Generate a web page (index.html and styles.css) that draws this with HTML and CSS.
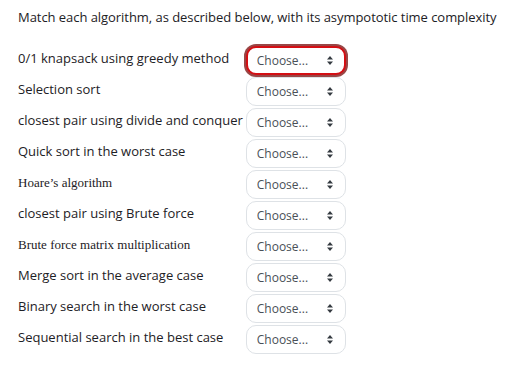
FILE: index.html
```html
<!DOCTYPE html>
<html>
<head>
<meta charset="utf-8">
<link rel="stylesheet" href="styles.css">
</head>
<body>
<div class="question">
  <p class="prompt">Match each algorithm, as described below, with its asympototic time complexity</p>
  <div class="answers">
    <div class="row"><div class="label">0/1 knapsack using greedy method</div><span class="select-wrap"><select class="choose focused"><option>Choose...</option></select><svg class="arrow" width="6" height="9" viewBox="0 0 6 9"><path d="M3 0L6 3.5H0Z M3 9L6 5.5H0Z" fill="#343a40"/></svg></span></div>
    <div class="row"><div class="label">Selection sort</div><span class="select-wrap"><select class="choose"><option>Choose...</option></select><svg class="arrow" width="6" height="9" viewBox="0 0 6 9"><path d="M3 0L6 3.5H0Z M3 9L6 5.5H0Z" fill="#343a40"/></svg></span></div>
    <div class="row"><div class="label">closest pair using divide and conquer</div><span class="select-wrap"><select class="choose"><option>Choose...</option></select><svg class="arrow" width="6" height="9" viewBox="0 0 6 9"><path d="M3 0L6 3.5H0Z M3 9L6 5.5H0Z" fill="#343a40"/></svg></span></div>
    <div class="row"><div class="label">Quick sort in the worst case</div><span class="select-wrap"><select class="choose"><option>Choose...</option></select><svg class="arrow" width="6" height="9" viewBox="0 0 6 9"><path d="M3 0L6 3.5H0Z M3 9L6 5.5H0Z" fill="#343a40"/></svg></span></div>
    <div class="row"><div class="label serif">Hoare’s algorithm</div><span class="select-wrap"><select class="choose"><option>Choose...</option></select><svg class="arrow" width="6" height="9" viewBox="0 0 6 9"><path d="M3 0L6 3.5H0Z M3 9L6 5.5H0Z" fill="#343a40"/></svg></span></div>
    <div class="row"><div class="label">closest pair using Brute force</div><span class="select-wrap"><select class="choose"><option>Choose...</option></select><svg class="arrow" width="6" height="9" viewBox="0 0 6 9"><path d="M3 0L6 3.5H0Z M3 9L6 5.5H0Z" fill="#343a40"/></svg></span></div>
    <div class="row"><div class="label serif">Brute force matrix multiplication</div><span class="select-wrap"><select class="choose"><option>Choose...</option></select><svg class="arrow" width="6" height="9" viewBox="0 0 6 9"><path d="M3 0L6 3.5H0Z M3 9L6 5.5H0Z" fill="#343a40"/></svg></span></div>
    <div class="row"><div class="label">Merge sort in the average case</div><span class="select-wrap"><select class="choose"><option>Choose...</option></select><svg class="arrow" width="6" height="9" viewBox="0 0 6 9"><path d="M3 0L6 3.5H0Z M3 9L6 5.5H0Z" fill="#343a40"/></svg></span></div>
    <div class="row"><div class="label">Binary search in the worst case</div><span class="select-wrap"><select class="choose"><option>Choose...</option></select><svg class="arrow" width="6" height="9" viewBox="0 0 6 9"><path d="M3 0L6 3.5H0Z M3 9L6 5.5H0Z" fill="#343a40"/></svg></span></div>
    <div class="row"><div class="label">Sequential search in the best case</div><span class="select-wrap"><select class="choose"><option>Choose...</option></select><svg class="arrow" width="6" height="9" viewBox="0 0 6 9"><path d="M3 0L6 3.5H0Z M3 9L6 5.5H0Z" fill="#343a40"/></svg></span></div>
  </div>
</div>
</body>
</html>
```
FILE: styles.css
```css
html, body {
  margin: 0;
  padding: 0;
  background: #ffffff;
}
body {
  font-family: "Open Sans", "Liberation Sans", sans-serif;
  font-size: 13px;
  color: #1d2125;
}
.question {
  padding: 8px 0 0 18px;
}
.prompt {
  margin: 0 0 19px 0;
  line-height: 19px;
  letter-spacing: -0.05px;
}
.answers {
  display: grid;
  grid-template-columns: max-content max-content;
  column-gap: 3px;
  row-gap: 2px;
}
.row {
  display: contents;
}
.label {
  padding-top: 3px;
  line-height: 19px;
}
.label.serif {
  font-family: "Liberation Serif", "Times New Roman", serif;
  font-size: 13px;
}
.select-wrap {
  position: relative;
  display: block;
  width: 100px;
  height: 29px;
}
.choose {
  appearance: none;
  -webkit-appearance: none;
  box-sizing: border-box;
  width: 100px;
  height: 29px;
  margin: 0;
  padding: 0 0 0 10px;
  border: 1px solid #dee2e6;
  border-radius: 10px;
  background: #ffffff;
  font-family: "Open Sans", "Liberation Sans", sans-serif;
  font-size: 12px;
  color: #495057;
  outline: none;
}
.choose.focused {
  border: 2px solid #d40f14;
  padding-left: 9px;
  box-shadow: 0 0 0 2px rgba(128, 24, 24, 0.8);
}
.arrow {
  position: absolute;
  left: 81px;
  top: 10px;
  pointer-events: none;
}
```
